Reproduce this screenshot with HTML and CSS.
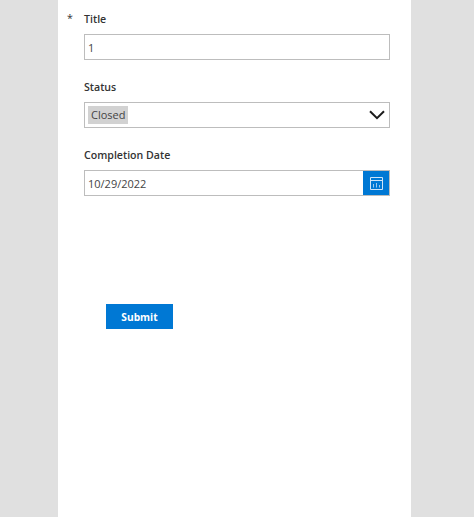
FILE: index.html
```html
<!DOCTYPE html>
<html lang="en">
<head>
    <meta charset="UTF-8">
    <title>Form</title>
    <link rel="stylesheet" href="styles.css">
</head>
<body>
    <div class="panel">
        <form class="form">
            <div class="field">
                <label class="field-label"><span class="required">*</span>Title</label>
                <div class="input-box">1</div>
            </div>
            <div class="field">
                <label class="field-label">Status</label>
                <div class="input-box select-box">
                    <span class="tag">Closed</span>
                    <svg class="chevron" width="16" height="10" viewBox="0 0 16 10">
                        <path d="M1 1.2 L8 8.2 L15 1.2" fill="none" stroke="#1b1b1b" stroke-width="2"/>
                    </svg>
                </div>
            </div>
            <div class="field">
                <label class="field-label">Completion Date</label>
                <div class="input-box date-box">
                    <span class="date-value">10/29/2022</span>
                    <span class="date-btn">
                        <svg width="13" height="13" viewBox="0 0 13 13">
                            <path d="M0.5 0.5 H12.5 V12.5 H0.5 Z M0.5 3.5 H12.5" fill="none" stroke="#cfe4f7" stroke-width="1"/>
                            <path d="M3.5 7 V10.5 M6.5 6 V10.5 M9.5 8 V10.5" fill="none" stroke="#9cc9ee" stroke-width="1"/>
                        </svg>
                    </span>
                </div>
            </div>
            <button class="submit-btn" type="button">Submit</button>
        </form>
    </div>
</body>
</html>
```

FILE: styles.css
```css
html, body {
    height: 100%;
}
body {
    margin: 0;
    background-color: #e0e0e0;
    font-family: 'Open Sans', 'Noto Sans', sans-serif;
    color: #333;
    overflow: hidden;
}
.panel {
    width: 353px;
    height: 100%;
    margin-left: 58px;
    background-color: white;
}
.form {
    padding: 10px 21px 0 26px;
}
.field {
    margin-bottom: 18px;
}
.field-label {
    display: block;
    position: relative;
    height: 18px;
    line-height: 18px;
    margin-bottom: 6px;
    font-size: 10.6px;
    font-weight: 600;
}
.required {
    position: absolute;
    left: -17px;
    top: -1px;
    font-weight: 400;
}
.input-box {
    box-sizing: border-box;
    display: flex;
    align-items: center;
    width: 306px;
    height: 26px;
    padding-left: 3px;
    border: 1px solid #bdbdbd;
    font-size: 11px;
    color: #444;
}
.select-box {
    justify-content: space-between;
    padding-right: 4px;
}
.tag {
    padding: 0 3px;
    line-height: 18px;
    background-color: #d2d2d2;
}
.date-box {
    justify-content: space-between;
    padding-right: 0;
}
.date-btn {
    display: flex;
    align-items: center;
    justify-content: center;
    width: 26px;
    height: 24px;
    background-color: #0078d4;
}
.submit-btn {
    display: block;
    width: 67px;
    height: 25px;
    margin: 108px 0 0 22px;
    padding: 0;
    border: none;
    background-color: #0078d4;
    color: white;
    font-family: inherit;
    font-size: 10.2px;
    font-weight: 700;
}
```
